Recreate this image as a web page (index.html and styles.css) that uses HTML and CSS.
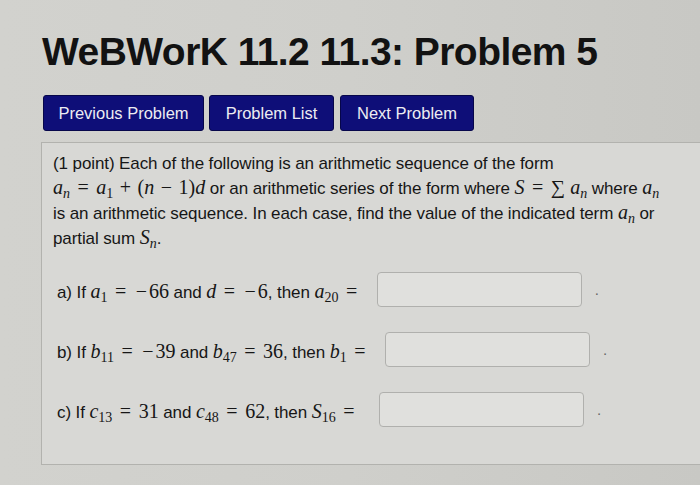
FILE: index.html
```html
<!DOCTYPE html>
<html>
<head>
    <meta charset="utf-8">
    <title>WeBWorK 11.2 11.3: Problem 5</title>
<link rel="stylesheet" href="styles.css">
</head>
<body>
<div class="page">
    <h1 class="title">WeBWorK 11.2 11.3: Problem 5</h1>

    <div class="nav">
        <button type="button" class="nav-btn prev">Previous Problem</button>
        <button type="button" class="nav-btn list">Problem List</button>
        <button type="button" class="nav-btn next">Next Problem</button>
    </div>

    <div class="problem">
        <p class="intro">
            (1 point) Each of the following is an arithmetic sequence of the form<br>
            <span class="m"><i>a</i><sub><i>n</i></sub><span class="rel">=</span><i>a</i><sub>1</sub><span class="bin">+</span>(<i>n</i><span class="bin">&minus;</span>1)<i>d</i></span> or an arithmetic series of the form where <span class="m"><i>S</i><span class="rel">=</span><span class="sum">&sum;</span><i>a</i><sub><i>n</i></sub></span> where <span class="m"><i>a</i><sub><i>n</i></sub></span><br>
            is an arithmetic sequence. In each case, find the value of the indicated term <span class="m"><i>a</i><sub><i>n</i></sub></span> or<br>
            partial sum <span class="m"><i>S</i><sub><i>n</i></sub></span>.
        </p>

        <div class="q">
            <span class="q-text">a) If <span class="m"><i>a</i><sub>1</sub><span class="rel">=</span><span class="neg">&minus;</span>66</span> and <span class="m"><i>d</i><span class="rel">=</span><span class="neg">&minus;</span>6</span>, then <span class="m"><i>a</i><sub>20</sub><span class="rel">=</span></span></span>
            <input type="text" class="answer">
            <span class="dot">.</span>
        </div>

        <div class="q">
            <span class="q-text">b) If <span class="m"><i>b</i><sub>11</sub><span class="rel">=</span><span class="neg">&minus;</span>39</span> and <span class="m"><i>b</i><sub>47</sub><span class="rel">=</span>36</span>, then <span class="m"><i>b</i><sub>1</sub><span class="rel">=</span></span></span>
            <input type="text" class="answer">
            <span class="dot">.</span>
        </div>

        <div class="q">
            <span class="q-text">c) If <span class="m"><i>c</i><sub>13</sub><span class="rel">=</span>31</span> and <span class="m"><i>c</i><sub>48</sub><span class="rel">=</span>62</span>, then <span class="m"><i>S</i><sub>16</sub><span class="rel">=</span></span></span>
            <input type="text" class="answer wide-gap">
            <span class="dot">.</span>
        </div>
    </div>
</div>
</body>
</html>
```

FILE: styles.css
```css
*
{
  margin: 0;
  padding: 0;
  box-sizing: border-box;
}

body
{
  font-family: 'Liberation Sans', Arial, sans-serif;
  color: #161616;
  overflow: hidden;
  height: 485px;
  background: linear-gradient(90deg, #d2d2ce 0%, #cfcfcb 50%, #c8c8c4 100%);
}

div.page
{
  padding-left: 41px;
  padding-top: 30px;
}

h1.title
{
  font-size: 39px;
  font-weight: bold;
  letter-spacing: -0.55px;
  line-height: 44px;
  color: #121212;
  margin-left: 1px;
}

div.nav
{
  display: flex;
  gap: 5px;
  margin-top: 21px;
  margin-left: 2px;
}

button.nav-btn
{
  height: 36px;
  background: #0e0e78;
  color: #ececf2;
  border: 1px solid #06064a;
  border-radius: 3px;
  font-family: 'Liberation Sans', Arial, sans-serif;
  font-size: 16.5px;
  padding: 0;
}

button.prev
{
  width: 161px;
}

button.list
{
  width: 125px;
}

button.next
{
  width: 134px;
  margin-left: 1px;
}

div.problem
{
  margin-top: 11px;
  width: 680px;
  border: 1px solid #b2b2ae;
  background: #d8d8d5;
  padding: 8px 0 37px 11px;
}

p.intro
{
  font-size: 17px;
  letter-spacing: -0.1px;
  line-height: 25px;
}

/* inline math, set like MathJax output */
span.m
{
  font-family: 'Liberation Serif', 'Times New Roman', serif;
  font-size: 20px;
  line-height: 1;
  letter-spacing: 0;
}

span.m sub
{
  font-size: 14px;
  vertical-align: -4px;
  line-height: 0;
}

span.m .rel
{
  padding: 0 7.5px;
}

span.m .bin
{
  padding: 0 6.5px;
}

span.m .neg
{
  padding: 0 2px;
}

span.m .sum
{
  padding-right: 5px;
}

div.q
{
  display: flex;
  align-items: center;
  height: 35px;
  margin-top: 25px;
  padding-left: 4px;
}

div.q:first-of-type
{
  margin-top: 21px;
}

span.q-text
{
  font-size: 17px;
  letter-spacing: -0.1px;
  padding-top: 4px;
}

input.answer
{
  width: 205px;
  height: 35px;
  margin-left: 12px;
  border: 1px solid #b0b0ad;
  border-radius: 4px;
  background: #e0e0dd;
}

input.wide-gap
{
  margin-left: 17px;
}

span.dot
{
  margin-left: 13px;
  font-size: 15px;
  color: #666;
}
```
